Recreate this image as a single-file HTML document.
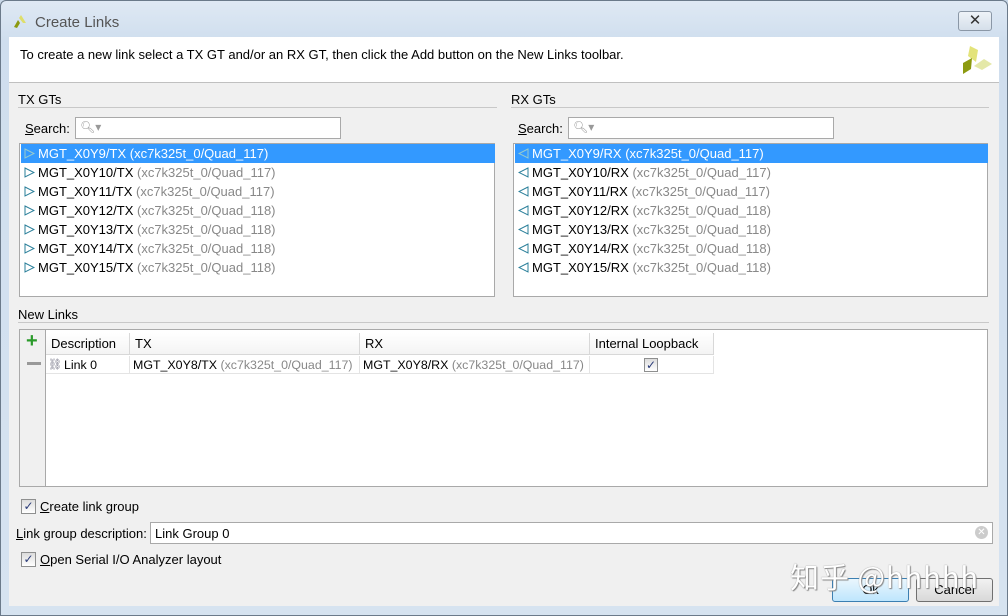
<!DOCTYPE html>
<html><head><meta charset="utf-8"><style>
*{box-sizing:border-box;margin:0;padding:0}
body{width:1008px;height:616px;overflow:hidden;background:#c9d8e8;font-family:"Liberation Sans","DejaVu Sans",sans-serif;font-size:13px;color:#000;position:relative}
.a{position:absolute}
.frame{left:0;top:0;width:1008px;height:616px;background:linear-gradient(#dfe9f4,#cfdeee 40px,#d6e3f0);border:1px solid #6b7a8a;border-radius:6px 6px 0 0}
.title{left:35px;top:14px;font-size:15px;color:#555}
.xbtn{left:958px;top:11px;width:34px;height:20px;border:1px solid #8a97a6;border-radius:3px;background:linear-gradient(#eef3f8,#d5dfea);text-align:center;font-size:15px;line-height:17px;color:#333}
.hdr{left:9px;top:37px;width:990px;height:46px;background:#fff;border-bottom:1px solid #c0c0c0}
.main{left:9px;top:83px;width:990px;height:523px;background:#f0f0f0}
.lbl{font-size:13px}
.hline{height:1px;background:#c8c8c8}
.inp{background:#fff;border:1px solid #a9a9a9}
.list{background:#fff;border:1px solid #a9a9a9}
.row{position:absolute;left:1px;height:19px;line-height:19px;padding-left:17px;white-space:nowrap}
.row.sel{background:#3399ff;color:#fff}
.row.sel .g{color:#fff}
.g{color:#888}
.ic{position:absolute;left:3px;top:4px;width:11px;height:11px}
.th{position:absolute;top:0;height:22px;line-height:22px;padding-left:5px;border-right:1px solid #d8d8d8;background:linear-gradient(#fff,#f4f4f4);border-bottom:1px solid #d8d8d8}
.td{position:absolute;top:23px;height:18px;line-height:18px;padding-left:3px;border-right:1px solid #e4e4e4;border-bottom:1px solid #e4e4e4;white-space:nowrap;font-size:12.4px;overflow:hidden}
.cb{width:15px;height:15px;border:1px solid #8e8f8f;background:linear-gradient(#dcdcdc,#fff);text-align:center;line-height:13px;font-size:12px;color:#2a3b78}
.btn{height:24px;border:1px solid #707070;border-radius:3px;text-align:center;line-height:22px;background:linear-gradient(#f2f2f2,#d8d8d8)}
</style></head><body>
<div class="a frame"></div>
<svg class="a" style="left:12px;top:14px" width="16" height="16" viewBox="0 0 16 16"><path d="M2 13 L6 6 L8 9 L5 14Z" fill="#8c9a10"/><path d="M7 4 L9 1 L14 9 L11 9Z" fill="#dede6a"/></svg>
<div class="a title">Create Links</div>
<div class="a xbtn">✕</div>
<div class="a hdr"></div>
<div class="a lbl" style="left:20px;top:47px">To create a new link select a TX GT and/or an RX GT, then click the Add button on the New Links toolbar.</div>
<svg class="a" style="left:960px;top:44px" width="34" height="34" viewBox="0 0 34 34"><path d="M10 2 L18 6 L16 18 L8 12Z" fill="#e3e37a"/><path d="M3 19 L12 14 L11 25 L3 30Z" fill="#8c9a10"/><path d="M14 22 L24 15 L32 20 L22 26Z" fill="#e4e8a8"/></svg>
<div class="a main"></div>

<div class="a lbl" style="left:18px;top:92px">TX GTs</div>
<div class="a hline" style="left:18px;top:107px;width:479px"></div>
<div class="a lbl" style="left:25px;top:121px"><u>S</u>earch:</div>
<div class="a inp" style="left:75px;top:117px;width:266px;height:22px"><span style="position:absolute;left:4px;top:2px;color:#999;font-size:12px">🔍︎▾</span></div>
<div class="a list" style="left:19px;top:143px;width:476px;height:154px">
<div class="row sel" style="top:0;width:474px"><svg class="ic" viewBox="0 0 11 11"><path d="M1 1 L10 5.5 L1 10Z" fill="none" stroke="#9cc" /></svg>MGT_X0Y9/TX <span class="g">(xc7k325t_0/Quad_117)</span></div>
<div class="row" style="top:19px"><svg class="ic" viewBox="0 0 11 11"><path d="M1 1 L10 5.5 L1 10Z" fill="none" stroke="#2a7f9a"/></svg>MGT_X0Y10/TX <span class="g">(xc7k325t_0/Quad_117)</span></div>
<div class="row" style="top:38px"><svg class="ic" viewBox="0 0 11 11"><path d="M1 1 L10 5.5 L1 10Z" fill="none" stroke="#2a7f9a"/></svg>MGT_X0Y11/TX <span class="g">(xc7k325t_0/Quad_117)</span></div>
<div class="row" style="top:57px"><svg class="ic" viewBox="0 0 11 11"><path d="M1 1 L10 5.5 L1 10Z" fill="none" stroke="#2a7f9a"/></svg>MGT_X0Y12/TX <span class="g">(xc7k325t_0/Quad_118)</span></div>
<div class="row" style="top:76px"><svg class="ic" viewBox="0 0 11 11"><path d="M1 1 L10 5.5 L1 10Z" fill="none" stroke="#2a7f9a"/></svg>MGT_X0Y13/TX <span class="g">(xc7k325t_0/Quad_118)</span></div>
<div class="row" style="top:95px"><svg class="ic" viewBox="0 0 11 11"><path d="M1 1 L10 5.5 L1 10Z" fill="none" stroke="#2a7f9a"/></svg>MGT_X0Y14/TX <span class="g">(xc7k325t_0/Quad_118)</span></div>
<div class="row" style="top:114px"><svg class="ic" viewBox="0 0 11 11"><path d="M1 1 L10 5.5 L1 10Z" fill="none" stroke="#2a7f9a"/></svg>MGT_X0Y15/TX <span class="g">(xc7k325t_0/Quad_118)</span></div>
</div>

<div class="a lbl" style="left:511px;top:92px">RX GTs</div>
<div class="a hline" style="left:511px;top:107px;width:478px"></div>
<div class="a lbl" style="left:518px;top:121px"><u>S</u>earch:</div>
<div class="a inp" style="left:568px;top:117px;width:266px;height:22px"><span style="position:absolute;left:4px;top:2px;color:#999;font-size:12px">🔍︎▾</span></div>
<div class="a list" style="left:513px;top:143px;width:475px;height:154px">
<div class="row sel" style="top:0;width:473px"><svg class="ic" viewBox="0 0 11 11"><path d="M10 1 L1 5.5 L10 10Z" fill="none" stroke="#9cc"/></svg>MGT_X0Y9/RX <span class="g">(xc7k325t_0/Quad_117)</span></div>
<div class="row" style="top:19px"><svg class="ic" viewBox="0 0 11 11"><path d="M10 1 L1 5.5 L10 10Z" fill="none" stroke="#2a7f9a"/></svg>MGT_X0Y10/RX <span class="g">(xc7k325t_0/Quad_117)</span></div>
<div class="row" style="top:38px"><svg class="ic" viewBox="0 0 11 11"><path d="M10 1 L1 5.5 L10 10Z" fill="none" stroke="#2a7f9a"/></svg>MGT_X0Y11/RX <span class="g">(xc7k325t_0/Quad_117)</span></div>
<div class="row" style="top:57px"><svg class="ic" viewBox="0 0 11 11"><path d="M10 1 L1 5.5 L10 10Z" fill="none" stroke="#2a7f9a"/></svg>MGT_X0Y12/RX <span class="g">(xc7k325t_0/Quad_118)</span></div>
<div class="row" style="top:76px"><svg class="ic" viewBox="0 0 11 11"><path d="M10 1 L1 5.5 L10 10Z" fill="none" stroke="#2a7f9a"/></svg>MGT_X0Y13/RX <span class="g">(xc7k325t_0/Quad_118)</span></div>
<div class="row" style="top:95px"><svg class="ic" viewBox="0 0 11 11"><path d="M10 1 L1 5.5 L10 10Z" fill="none" stroke="#2a7f9a"/></svg>MGT_X0Y14/RX <span class="g">(xc7k325t_0/Quad_118)</span></div>
<div class="row" style="top:114px"><svg class="ic" viewBox="0 0 11 11"><path d="M10 1 L1 5.5 L10 10Z" fill="none" stroke="#2a7f9a"/></svg>MGT_X0Y15/RX <span class="g">(xc7k325t_0/Quad_118)</span></div>
</div>

<div class="a lbl" style="left:18px;top:307px">New Links</div>
<div class="a hline" style="left:18px;top:322px;width:971px"></div>
<div class="a" style="left:19px;top:329px;width:969px;height:158px;border:1px solid #a9a9a9;background:#f0f0f0"></div>
<div class="a" style="left:45px;top:330px;width:942px;height:156px;background:#fff;border-left:1px solid #a9a9a9"></div>
<div class="a" style="left:26px;top:332px;color:#2a9a2a;font-size:20px;font-weight:bold;line-height:18px">+</div>
<div class="a" style="left:27px;top:362px;width:14px;height:3px;background:#999"></div>
<div class="a" style="left:46px;top:333px;width:670px;height:42px">
<div class="th" style="left:0;width:84px">Description</div>
<div class="th" style="left:84px;width:230px">TX</div>
<div class="th" style="left:314px;width:230px">RX</div>
<div class="th" style="left:544px;width:124px">Internal Loopback</div>
<div class="td" style="left:0;width:84px;padding-left:18px"><span style="position:absolute;left:2px;top:0;color:#778;font-size:11px">⛓</span>Link 0</div>
<div class="td" style="left:84px;width:230px">MGT_X0Y8/TX <span class="g">(xc7k325t_0/Quad_117)</span></div>
<div class="td" style="left:314px;width:230px">MGT_X0Y8/RX <span class="g">(xc7k325t_0/Quad_117)</span></div>
<div class="td" style="left:544px;width:124px"><div class="cb" style="position:absolute;left:54px;top:2px;width:14px;height:14px">✓</div></div>
</div>

<div class="a cb" style="left:21px;top:499px">✓</div>
<div class="a lbl" style="left:40px;top:499px"><u>C</u>reate link group</div>
<div class="a lbl" style="left:16px;top:526px"><u>L</u>ink group description:</div>
<div class="a inp" style="left:150px;top:522px;width:843px;height:22px"><span style="position:absolute;left:4px;top:3px">Link Group 0</span><span style="position:absolute;right:4px;top:3px;width:13px;height:13px;border-radius:50%;background:#ccc;color:#fff;font-size:10px;line-height:13px;text-align:center">✕</span></div>
<div class="a cb" style="left:21px;top:552px">✓</div>
<div class="a lbl" style="left:40px;top:552px"><u>O</u>pen Serial I/O Analyzer layout</div>

<div class="a btn" style="left:832px;top:578px;width:77px;border-color:#3c7fb1;background:linear-gradient(#eaf6fd,#bee6fd)">Ok</div>
<div class="a btn" style="left:916px;top:578px;width:77px">Cancel</div>
<div class="a" style="left:790px;top:555px;font-family:'Noto Sans CJK SC',sans-serif;font-size:29px;color:#fff;text-shadow:0 0 1px #777,1px 1px 1px #888;letter-spacing:1px;white-space:nowrap">知乎 @hhhhh</div>
</body></html>
